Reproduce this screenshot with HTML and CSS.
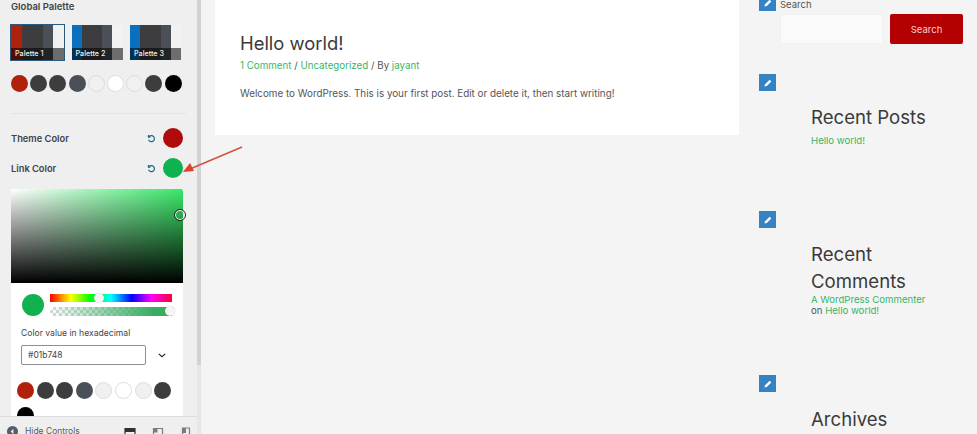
FILE: index.html
```html
<!DOCTYPE html>
<html lang="en">
  <head>
    <meta charset="UTF-8" />
    <meta name="viewport" content="width=device-width, initial-scale=1.0" />
    <title>Customizer</title>
    <link rel="stylesheet" href="styles.css">
  </head>
  <body>
    <aside class="controls">
      <div class="controls-scroll">
        <h2 class="control-title">Global Palette</h2>
        <div class="palettes">
          <div class="palette palette-active">
            <i class="c-red"></i><i class="c-dark wide"></i><i class="c-slate"></i><i class="c-light"></i>
            <span class="palette-name">Palette 1</span>
          </div>
          <div class="palette">
            <i class="c-blue"></i><i class="c-dark wide"></i><i class="c-slate"></i><i class="c-pale"></i>
            <span class="palette-name">Palette 2</span>
          </div>
          <div class="palette">
            <i class="c-blue"></i><i class="c-dark wide"></i><i class="c-slate"></i><i class="c-pale"></i>
            <span class="palette-name">Palette 3</span>
          </div>
        </div>
        <div class="swatches">
          <span class="dot c-red"></span>
          <span class="dot c-dark"></span>
          <span class="dot c-dark"></span>
          <span class="dot c-slate"></span>
          <span class="dot c-light"></span>
          <span class="dot c-white"></span>
          <span class="dot c-light"></span>
          <span class="dot c-dark"></span>
          <span class="dot c-black"></span>
        </div>
        <hr class="divider" />
        <div class="color-row">
          <span class="color-label">Theme Color</span>
          <svg class="reset" viewBox="0 0 10 10"><path d="M2.2 3a3.4 3.4 0 1 1-.5 3.4" /><path d="M1.6 1.2v2.2h2.2" /></svg>
          <span class="color-big c-theme"></span>
        </div>
        <div class="color-row">
          <span class="color-label">Link Color</span>
          <svg class="reset" viewBox="0 0 10 10"><path d="M2.2 3a3.4 3.4 0 1 1-.5 3.4" /><path d="M1.6 1.2v2.2h2.2" /></svg>
          <span class="color-big c-green"></span>
        </div>
        <div class="picker">
          <div class="picker-field"><span class="picker-handle"></span></div>
          <div class="picker-body">
            <div class="picker-sliders">
              <span class="picker-preview"></span>
              <div class="slider-stack">
                <div class="hue"><span class="knob knob-hue"></span></div>
                <div class="alpha"><span class="knob knob-alpha"></span></div>
              </div>
            </div>
            <label class="hex-label" for="hex">Color value in hexadecimal</label>
            <div class="hex-row">
              <input class="hex-input" id="hex" type="text" value="#01b748" />
              <svg class="chevron" viewBox="0 0 10 6"><path d="M1 1l4 3.6L9 1" /></svg>
            </div>
            <div class="picker-swatches">
              <span class="dot c-red"></span>
              <span class="dot c-dark"></span>
              <span class="dot c-dark"></span>
              <span class="dot c-slate"></span>
              <span class="dot c-light"></span>
              <span class="dot c-white"></span>
              <span class="dot c-light"></span>
              <span class="dot c-dark"></span>
              <span class="dot c-black"></span>
            </div>
          </div>
        </div>
      </div>
      <footer class="controls-footer">
        <svg class="hide-icon" viewBox="0 0 12 12"><circle cx="6" cy="6" r="6" /><path d="M7 3L4 6l3 3z" /></svg>
        <span class="hide-text">Hide Controls</span>
        <div class="devices">
          <svg viewBox="0 0 12 12"><path class="frame" d="M1 1.500h10v9H1z" /><path class="fill" d="M1 1.500h10v3.500H1z" /></svg>
          <svg viewBox="0 0 12 12"><path class="frame thin" d="M1.500 1.500h9v9h-9z" /><path class="fill thin" d="M1.500 1.500h4v4h-4z" /></svg>
          <svg viewBox="0 0 12 12"><path class="frame thin" d="M2.500 1h7v10h-7z" /><path class="fill thin" d="M2.500 1h3.500v5H2.500z" /></svg>
        </div>
      </footer>
    </aside>

    <main class="preview">
      <article class="post">
        <h1 class="post-title">Hello world!</h1>
        <p class="post-meta"><a>1 Comment</a> / <a>Uncategorized</a> / By <a>jayant</a></p>
        <p class="post-text">Welcome to WordPress. This is your first post. Edit or delete it, then start writing!</p>
      </article>

      <div class="widgets">
        <section class="widget widget-search">
          <span class="edit"><svg viewBox="0 0 10 10"><path d="M1.500 8.500l.6-2.300L6.600 1.700l1.700 1.700-4.500 4.500z" /></svg></span>
          <div class="search-body">
            <span class="search-label">Search</span>
            <div class="search-row">
              <input class="search-input" type="text" />
              <button class="search-btn" type="button">Search</button>
            </div>
          </div>
        </section>

        <section class="widget widget-posts">
          <span class="edit"><svg viewBox="0 0 10 10"><path d="M1.500 8.500l.6-2.300L6.600 1.700l1.700 1.700-4.500 4.500z" /></svg></span>
          <h2 class="widget-title">Recent Posts</h2>
          <p class="widget-text"><a>Hello world!</a></p>
        </section>

        <section class="widget widget-comments">
          <span class="edit"><svg viewBox="0 0 10 10"><path d="M1.500 8.500l.6-2.300L6.600 1.700l1.700 1.700-4.500 4.500z" /></svg></span>
          <h2 class="widget-title">Recent<br />Comments</h2>
          <p class="widget-text"><a>A WordPress Commenter</a><br />on <a>Hello world!</a></p>
        </section>

        <section class="widget widget-archives">
          <span class="edit"><svg viewBox="0 0 10 10"><path d="M1.500 8.500l.6-2.300L6.600 1.700l1.700 1.700-4.500 4.500z" /></svg></span>
          <h2 class="widget-title">Archives</h2>
        </section>
      </div>
    </main>

    <!-- annotation arrow drawn over the screenshot -->
    <svg class="arrow" viewBox="0 0 62 30">
      <path class="arrow-line" d="M60 1L8 23" />
      <path class="arrow-head" d="M1 26l7-9 4 8z" />
    </svg>
  </body>
</html>
```

FILE: styles.css
```css
* {
  box-sizing: border-box;
  margin: 0;
  padding: 0;
}

html,
body {
  height: 100%;
  overflow: hidden;
}

body {
  display: flex;
  font-family: Inter, "Liberation Sans", Arial, sans-serif;
  background-color: #f4f4f4;
  color: #3a3a3a;
}

/* left customizer panel */
.controls {
  position: relative;
  flex: 0 0 201px;
  height: 434px;
  background-color: #efefef;
  border-right: 4px solid #e6e6e6;
}

/* scrollbar thumb */
.controls::after {
  content: "";
  position: absolute;
  top: 0;
  right: -4px;
  width: 4px;
  height: 365px;
  background-color: #d2d2d2;
}

.controls-scroll {
  height: 434px;
  padding: 1px 11px 0;
  overflow: hidden;
}

.control-title {
  font-size: 9.500px;
  font-weight: 600;
  line-height: 12px;
  color: #3c434a;
}

.palettes {
  display: flex;
  justify-content: space-between;
  margin-top: 12px;
  width: 170px;
}

.palette {
  position: relative;
  display: flex;
  width: 51px;
  height: 35px;
}

.palette i {
  flex: 2 1 0;
}

.palette i.wide {
  flex-grow: 4;
}

.palette-active {
  width: 53px;
  outline: 1px solid #2c5a7c;
}

.palette-name {
  position: absolute;
  left: 0;
  right: 0;
  bottom: 0;
  height: 12px;
  padding-left: 4px;
  font-size: 7.200px;
  font-weight: 500;
  line-height: 12px;
  color: #f0f0f0;
  background-color: rgba(0, 0, 0, 0.55);
}

.c-red { background-color: #b0210b; }
.c-dark { background-color: #3d3d3f; }
.c-slate { background-color: #4b4f58; }
.c-light { background-color: #f0f0f0; }
.c-pale { background-color: #f2f2f2; }
.c-white { background-color: #ffffff; }
.c-black { background-color: #000000; }
.c-blue { background-color: #0a6fbe; }
.c-theme { background-color: #b10a0a; }
.c-green { background-color: #0fb24e; }

.dot {
  flex: 0 0 17px;
  height: 17px;
  border-radius: 50%;
}

.dot.c-light,
.dot.c-white {
  border: 1px solid #dddddd;
}

.swatches {
  display: flex;
  gap: 2.200px;
  margin-top: 15px;
}

.divider {
  margin-top: 21px;
  border: 0;
  border-top: 1px solid #e4e4e4;
}

.color-row {
  display: flex;
  align-items: center;
  width: 172px;
  height: 20px;
  margin-top: 14px;
}

.color-row + .color-row {
  margin-top: 10px;
}

.color-label {
  flex: 1;
  font-size: 9.300px;
  font-weight: 600;
  color: #3c434a;
}

.reset {
  width: 9px;
  height: 9px;
  margin-right: 7px;
  fill: none;
  stroke: #17688f;
  stroke-width: 1.300;
}

.color-big {
  width: 20px;
  height: 20px;
  border-radius: 50%;
}

/* color picker popup */
.picker {
  width: 172px;
  margin-top: 11px;
  background-color: #ffffff;
}

.picker-field {
  position: relative;
  height: 94px;
  background-image: linear-gradient(to top, #000000, rgba(0, 0, 0, 0) 100%),
    linear-gradient(to right, #ffffff, #38e868);
  border-radius: 2px 2px 0 0;
}

.picker-handle {
  position: absolute;
  top: 20px;
  right: -3px;
  width: 12px;
  height: 12px;
  border: 1px solid #222222;
  border-radius: 50%;
  box-shadow: inset 0 0 0 1px #ffffff;
}

.picker-body {
  padding: 11px 10px 0;
  height: 140px;
}

.picker-sliders {
  display: flex;
  align-items: center;
  gap: 6px;
  padding-left: 1px;
}

.picker-preview {
  flex: 0 0 22px;
  height: 22px;
  border-radius: 50%;
  background-color: #0fb24e;
}

.slider-stack {
  display: flex;
  flex-direction: column;
  gap: 5px;
  width: 122px;
}

.hue,
.alpha {
  position: relative;
  height: 8px;
}

.hue {
  background-image: linear-gradient(to right, #f00 0%, #ff0 17%, #0f0 33%, #0ff 50%, #00f 67%, #f0f 83%, #f03 100%);
}

.alpha {
  height: 9px;
  background-image: linear-gradient(to right, rgba(50, 175, 95, 0), #38ad62 85%),
    repeating-conic-gradient(#d8d8d8 0 25%, #ffffff 0 50%);
  background-size: auto, 6px 6px;
}

.knob {
  position: absolute;
  top: -1px;
  width: 10px;
  height: 10px;
  border-radius: 50%;
  background-color: #f5f5f5;
  box-shadow: 0 0 1px rgba(0, 0, 0, 0.3);
}

.knob-hue {
  left: 44px;
}

.knob-alpha {
  right: -3px;
}

.hex-label {
  display: block;
  margin-top: 12px;
  font-size: 8.600px;
  line-height: 10px;
  color: #444444;
}

.hex-row {
  display: flex;
  align-items: center;
  margin-top: 7px;
}

.hex-input {
  width: 125px;
  height: 20px;
  padding-left: 6px;
  font-family: inherit;
  font-size: 8.500px;
  color: #444444;
  background-color: #ffffff;
  border: 1px solid #8c8f94;
  border-radius: 2px;
}

.chevron {
  width: 8px;
  height: 5px;
  margin-left: 12px;
  fill: none;
  stroke: #222222;
  stroke-width: 1.400;
}

.picker-swatches {
  display: flex;
  flex-wrap: wrap;
  gap: 8px 2.600px;
  margin: 17px 0 0 -4px;
  width: 170px;
}

.controls-footer {
  position: absolute;
  left: 0;
  right: 0;
  bottom: 0;
  display: flex;
  align-items: flex-start;
  height: 18px;
  padding: 9px 5px 0 7px;
  background-color: #efefef;
  border-top: 1px solid #dddddd;
}

.hide-icon {
  flex: 0 0 11px;
  height: 11px;
  fill: #555d66;
}

.hide-icon path {
  fill: #efefef;
}

.hide-text {
  margin-left: 7px;
  font-size: 8.500px;
  line-height: 10px;
  color: #555d66;
}

.devices {
  display: flex;
  gap: 16px;
  margin-left: auto;
  margin-top: 1px;
}

.devices svg {
  width: 12px;
  height: 12px;
}

.frame {
  fill: none;
  stroke: #2c3338;
  stroke-width: 1.200;
}

.frame.thin {
  stroke: #777d83;
}

.fill {
  fill: #2c3338;
}

.fill.thin {
  fill: #777d83;
}

/* site preview */
.preview {
  flex: 1;
  display: flex;
  align-items: flex-start;
  padding-left: 14px;
}

.post {
  flex: 0 0 524px;
  height: 135px;
  padding: 32px 25px 0;
  background-color: #ffffff;
}

.post-title {
  font-size: 18.400px;
  font-weight: 400;
  line-height: 22px;
  color: #3a3a3a;
}

.post-meta {
  margin-top: 6px;
  font-size: 9.750px;
  line-height: 12px;
  color: #555555;
}

a {
  color: #35b566;
}

.post-text {
  margin-top: 14px;
  font-size: 9.850px;
  line-height: 14px;
  color: #555555;
}

.widgets {
  flex: 0 0 218px;
  margin-left: 20px;
}

.widget {
  position: relative;
  padding-left: 52px;
}

.edit {
  position: absolute;
  left: 0;
  top: 0;
  display: flex;
  align-items: center;
  justify-content: center;
  width: 17px;
  height: 17px;
  background-color: #3582c4;
}

.edit svg {
  width: 10px;
  height: 10px;
  fill: #ffffff;
}

.widget-search {
  height: 80px;
  margin-top: -6px;
  padding-left: 21px;
}

.search-label {
  display: block;
  padding-top: 6px;
  font-size: 9.500px;
  line-height: 10px;
  color: #555555;
}

.search-row {
  display: flex;
  gap: 7px;
  margin-top: 4px;
}

.search-input {
  width: 103px;
  height: 30px;
  background-color: #fafafa;
  border: 1px solid #f2f2f2;
}

.search-btn {
  width: 73px;
  height: 30px;
  font-family: inherit;
  font-size: 9.500px;
  color: #f5d0d0;
  background-color: #b40000;
  border: none;
  border-radius: 2px;
}

.widget-posts {
  height: 137px;
  padding-top: 30px;
}

.widget-comments {
  height: 164px;
  padding-top: 30px;
}

.widget-archives {
  padding-top: 31px;
}

.widget-title {
  font-size: 18.600px;
  font-weight: 400;
  line-height: 27px;
  color: #3a3a3a;
}

.widget-text {
  margin-top: -1px;
  font-size: 9.600px;
  line-height: 11px;
  color: #555555;
}

.widget-posts .widget-text {
  margin-top: 4px;
}

/* red annotation arrow */
.arrow {
  position: absolute;
  left: 182px;
  top: 146px;
  width: 62px;
  height: 30px;
}

.arrow-line {
  fill: none;
  stroke: #d4513b;
  stroke-width: 1.500;
}

.arrow-head {
  fill: #e0402a;
}
```
